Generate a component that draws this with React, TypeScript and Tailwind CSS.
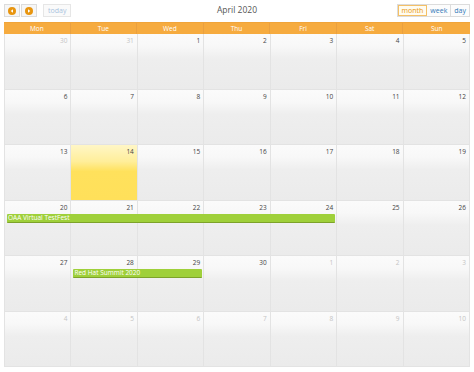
const DAYS = ["Mon", "Tue", "Wed", "Thu", "Fri", "Sat", "Sun"];

const COL_START = [
  "col-start-1",
  "col-start-2",
  "col-start-3",
  "col-start-4",
  "col-start-5",
  "col-start-6",
  "col-start-7",
];

type Day = { n: number; other?: boolean; today?: boolean };
type Ev = { title: string; start: string; span: string };

const weeks: { days: Day[]; events: Ev[] }[] = [
  {
    days: [{ n: 30, other: true }, { n: 31, other: true }, { n: 1 }, { n: 2 }, { n: 3 }, { n: 4 }, { n: 5 }],
    events: [],
  },
  { days: [6, 7, 8, 9, 10, 11, 12].map((n) => ({ n })), events: [] },
  {
    days: [13, 14, 15, 16, 17, 18, 19].map((n) => ({ n, today: n === 14 })),
    events: [],
  },
  {
    days: [20, 21, 22, 23, 24, 25, 26].map((n) => ({ n })),
    events: [{ title: "OAA Virtual TestFest", start: "col-start-1", span: "col-span-5" }],
  },
  {
    days: [{ n: 27 }, { n: 28 }, { n: 29 }, { n: 30 }, { n: 1, other: true }, { n: 2, other: true }, { n: 3, other: true }],
    events: [{ title: "Red Hat Summit 2020", start: "col-start-2", span: "col-span-2" }],
  },
  {
    days: [4, 5, 6, 7, 8, 9, 10].map((n) => ({ n, other: true })),
    events: [],
  },
];

const ArrowBtn = ({ dir }: { dir: "l" | "r" }) => (
  <button className="flex h-[13px] w-4 items-center justify-center border border-[#dcdcdc] bg-[#f6f6f6]">
    <svg width="8" height="8" viewBox="0 0 8 8">
      <circle cx="4" cy="4" r="4" fill="#e8950f" />
      {dir === "l" ? (
        <path d="M5 2.2 L2.7 4 L5 5.8 Z" fill="#fff" />
      ) : (
        <path d="M3 2.2 L5.3 4 L3 5.8 Z" fill="#fff" />
      )}
    </svg>
  </button>
);

export default function App() {
  return (
    <div className="h-[372px] w-[474px] bg-white px-1 font-['Open_Sans',_'Liberation_Sans',_sans-serif] text-[#333]">
      <div className="flex h-[22px] items-start pt-1">
        <div className="flex w-[160px] gap-px">
          <ArrowBtn dir="l" />
          <ArrowBtn dir="r" />
          <button className="ml-[5px] h-[13px] border border-[#e6e6e6] bg-[#fafafa] px-[4px] text-[7px] leading-[11px] text-[#a9c3de]">
            today
          </button>
        </div>
        <div className="flex-1 text-center text-[8.5px] leading-[11px] text-[#555]">April 2020</div>
        <div className="flex w-[160px] justify-end">
          <div className="flex h-[13px] border border-[#dcdcdc] bg-[#fcfcfc] text-[7px] leading-[11px]">
            <span className="border border-[#f4c067] bg-[#fffcf0] px-[3px] leading-[9px] text-[#e8950f]">month</span>
            <span className="border-r border-[#dcdcdc] px-[3px] text-[#2f78b8]">week</span>
            <span className="px-[3px] text-[#2f78b8]">day</span>
          </div>
        </div>
      </div>

      <div className="grid grid-cols-7 border-t border-[#f0a43a] bg-[#f6ab3f]">
        {DAYS.map((d, i) => (
          <div
            key={d}
            className={`h-[11px] text-center text-[6.5px] leading-[11px] text-white ${i < 6 ? "border-r border-[#eaa040]" : ""}`}
          >
            {d}
          </div>
        ))}
      </div>

      <div className="border-l border-[#e3e3e3]">
        {weeks.map((w, wi) => (
          <div key={wi} className="grid h-[55.5px] grid-cols-7 grid-rows-[13px_9px_1fr]">
            {w.days.map((d, di) => (
              <div
                key={di}
                className={`${COL_START[di]} row-span-3 row-start-1 border-b border-r border-[#e3e3e3] px-[3px] pt-[2px] text-right text-[6.5px] leading-[9px] ${
                  d.today
                    ? "bg-[linear-gradient(to_bottom,#fff6c6_0%,#ffee9a_30%,#ffe15c_48%,#ffe05a_100%)]"
                    : "bg-[linear-gradient(to_bottom,#fbfbfb_0%,#f8f8f8_22%,#eeeeee_45%,#ebebeb_100%)]"
                } ${d.other ? "text-[#c4c4c4]" : "text-[#444]"}`}
              >
                {d.n}
              </div>
            ))}
            {w.events.map((e) => (
              <div
                key={e.title}
                className={`${e.start} ${e.span} row-start-2 mx-[2px] h-[9px] truncate rounded-[1px] border-b border-[#7da32a] bg-[#9fd03a] px-[1px] text-[6.5px] leading-[8px] text-white`}
              >
                {e.title}
              </div>
            ))}
          </div>
        ))}
      </div>
    </div>
  );
}
